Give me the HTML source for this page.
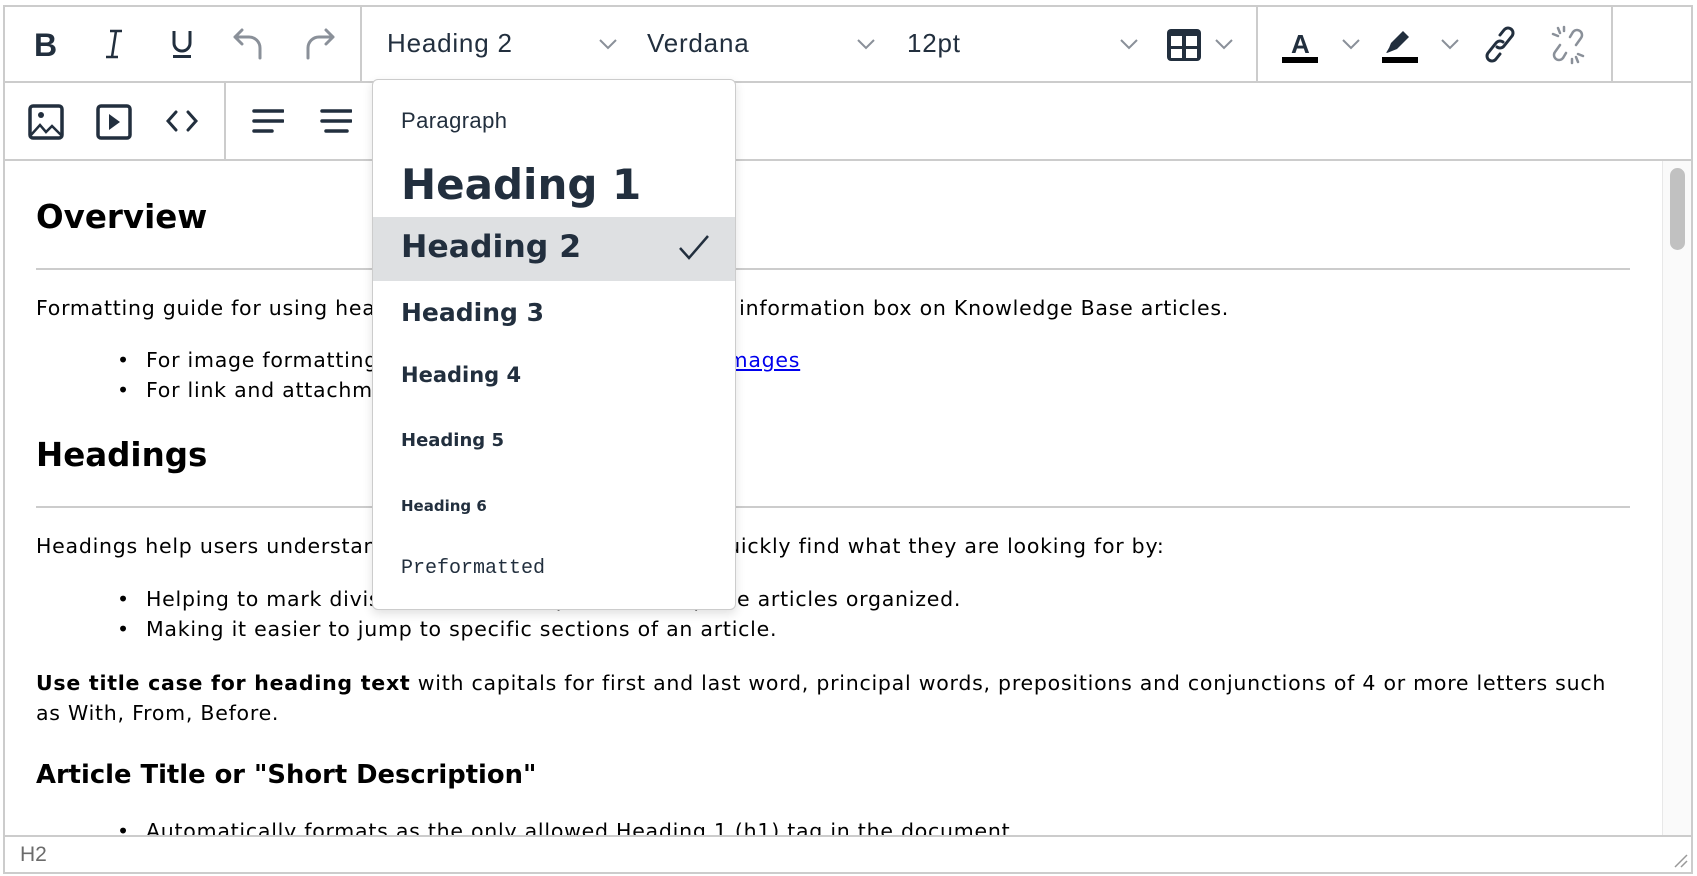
<!DOCTYPE html>
<html><head><meta charset="utf-8">
<style>
*{box-sizing:border-box;margin:0;padding:0}
body{width:1697px;height:876px;background:#fff;position:relative;overflow:hidden;font-family:"DejaVu Sans",Verdana,sans-serif;color:#000}
.a{position:absolute}
.frame{left:3px;top:5px;width:1690px;height:869px;border:2px solid #ccc}
.hl{height:2px;background:#ccc}
.vl{width:2px;background:#ccc}
.tb{font-family:"Liberation Sans",sans-serif;font-size:26px;color:#222f3e;letter-spacing:0.8px;top:28px}
svg{position:absolute}
.c{font-size:20.5px;letter-spacing:0.75px;line-height:24px;white-space:nowrap}
.h2{font-weight:bold;font-size:32.5px;white-space:nowrap}
.dd{left:372px;top:79px;width:364px;height:531px;background:#fff;border:1px solid #ccc;border-radius:6px;box-shadow:0 4px 10px rgba(0,0,0,.12)}
.di{position:absolute;left:28px;color:#222f3e;font-weight:bold;white-space:nowrap;font-family:"DejaVu Sans",sans-serif}
</style></head><body>
<div class="a frame"></div>
<div class="a hl" style="left:3px;top:81px;width:1690px"></div>
<div class="a hl" style="left:3px;top:159px;width:1690px"></div>
<div class="a vl" style="left:360px;top:5px;height:77px"></div>
<div class="a vl" style="left:1256px;top:5px;height:77px"></div>
<div class="a vl" style="left:1611px;top:5px;height:77px"></div>
<div class="a vl" style="left:224px;top:82px;height:78px"></div>

<svg style="left:30px;top:28px" width="32" height="32" viewBox="0 0 32 32"><text x="4" y="28" font-family="Liberation Sans" font-weight="bold" font-size="32" fill="#222f3e">B</text></svg>
<svg style="left:98px;top:28px" width="32" height="32" viewBox="0 0 32 32"><path d="M12 3h12M8 29h12M18 3l-4 26" stroke="#222f3e" stroke-width="2.5" fill="none"/></svg>
<svg style="left:166px;top:28px" width="32" height="32" viewBox="0 0 32 32"><path d="M8 3v12a8 8 0 0 0 16 0V3" stroke="#222f3e" stroke-width="3" fill="none"/><rect x="7" y="27" width="18" height="3" fill="#222f3e"/></svg>
<svg style="left:232px;top:26px" width="34" height="36" viewBox="0 0 34 36"><path d="M10 4L3 11l7 7M3 11h14a11 11 0 0 1 11 11v10" stroke="#8a9099" stroke-width="3" fill="none" stroke-linecap="round" stroke-linejoin="round"/></svg>
<svg style="left:302px;top:26px" width="34" height="36" viewBox="0 0 34 36"><path d="M24 4l7 7-7 7M31 11H17A11 11 0 0 0 6 22v10" stroke="#8a9099" stroke-width="3" fill="none" stroke-linecap="round" stroke-linejoin="round"/></svg>

<div class="a tb" style="left:387px">Heading 2</div>
<div class="a tb" style="left:647px">Verdana</div>
<div class="a tb" style="left:907px">12pt</div>
<svg style="left:598px;top:38px" width="20" height="12"><path d="M2 2l8 8 8-8" stroke="#8a9099" stroke-width="2" fill="none"/></svg>
<svg style="left:856px;top:38px" width="20" height="12"><path d="M2 2l8 8 8-8" stroke="#8a9099" stroke-width="2" fill="none"/></svg>
<svg style="left:1119px;top:38px" width="20" height="12"><path d="M2 2l8 8 8-8" stroke="#8a9099" stroke-width="2" fill="none"/></svg>
<svg style="left:1166px;top:28px" width="36" height="34" viewBox="0 0 36 34"><rect x="1" y="1" width="34" height="32" rx="4" fill="#222f3e"/><rect x="5" y="8" width="11" height="10" fill="#fff"/><rect x="20" y="8" width="11" height="10" fill="#fff"/><rect x="5" y="21" width="11" height="9" fill="#fff"/><rect x="20" y="21" width="11" height="9" fill="#fff"/></svg>
<svg style="left:1214px;top:38px" width="20" height="12"><path d="M2 2l8 8 8-8" stroke="#8a9099" stroke-width="2" fill="none"/></svg>
<svg style="left:1281px;top:28px" width="38" height="36" viewBox="0 0 38 36"><text x="10" y="25" font-family="Liberation Sans" font-weight="bold" font-size="26" fill="#222f3e">A</text><rect x="1" y="29" width="36" height="6" fill="#000"/></svg>
<svg style="left:1341px;top:38px" width="20" height="12"><path d="M2 2l8 8 8-8" stroke="#8a9099" stroke-width="2" fill="none"/></svg>
<svg style="left:1381px;top:27px" width="38" height="37" viewBox="0 0 38 37"><path d="M6 26l4-10 12-12 6 6-12 12z" fill="#222f3e"/><path d="M5 26l5-2-2-3z" fill="#222f3e"/><rect x="1" y="30" width="36" height="6" fill="#000"/></svg>
<svg style="left:1440px;top:38px" width="20" height="12"><path d="M2 2l8 8 8-8" stroke="#8a9099" stroke-width="2" fill="none"/></svg>
<svg style="left:1482px;top:25px" width="36" height="40" viewBox="0 0 36 40"><path d="M18 10l4-5a5 5 0 0 1 8 6l-8 10a5 5 0 0 1-7 1M18 29l-4 5a5 5 0 0 1-8-6l8-10a5 5 0 0 1 7-1" stroke="#222f3e" stroke-width="3" fill="none" stroke-linecap="round"/></svg>
<svg style="left:1550px;top:25px" width="36" height="40" viewBox="0 0 36 40"><path d="M20 12l3-5a5 5 0 0 1 8 6l-5 7M16 28l-3 5a5 5 0 0 1-8-6l5-7M8 3l2 5M3 9l5 2M28 37l-2-5M33 31l-5-2M14 2v4M22 38v-4" stroke="#8a9099" stroke-width="2.5" fill="none" stroke-linecap="round"/></svg>

<svg style="left:28px;top:104px" width="36" height="36" viewBox="0 0 36 36"><rect x="2" y="2" width="32" height="32" rx="3" stroke="#222f3e" stroke-width="3.5" fill="none"/><circle cx="13" cy="11" r="3" fill="#222f3e"/><path d="M3 31l9-10 6 7 6-6 10 10" stroke="#222f3e" stroke-width="2.5" fill="none"/></svg>
<svg style="left:96px;top:104px" width="36" height="36" viewBox="0 0 36 36"><rect x="2" y="2" width="32" height="32" rx="3" stroke="#222f3e" stroke-width="3.5" fill="none"/><path d="M13 10v16l11-8z" fill="#222f3e"/></svg>
<svg style="left:166px;top:109px" width="32" height="24" viewBox="0 0 32 24"><path d="M10 3L2 12l8 9M22 3l8 9-8 9" stroke="#222f3e" stroke-width="3" fill="none" stroke-linecap="round"/></svg>
<svg style="left:252px;top:108px" width="32" height="28" viewBox="0 0 32 28"><path d="M2 3h29M2 13h29M2 23h18" stroke="#222f3e" stroke-width="3.5" stroke-linecap="round"/></svg>
<svg style="left:320px;top:108px" width="32" height="28" viewBox="0 0 32 28"><path d="M2 3h29M2 13h29M6 23h21" stroke="#222f3e" stroke-width="3.5" stroke-linecap="round"/></svg>

<div class="a h2" style="left:36px;top:198px">Overview</div>
<div class="a hl" style="left:36px;top:268px;width:1594px"></div>
<div class="a c" style="left:36px;top:296px">Formatting guide for using headings, lists, tables, links and the information box on Knowledge Base articles.</div>
<div class="a c" style="left:117px;top:348px">•</div>
<div class="a c" style="left:146px;top:348px">For image formatting guidelines, see <span style="color:#00e;text-decoration:underline">KB Formatting Images</span></div>
<div class="a c" style="left:117px;top:378px">•</div>
<div class="a c" style="left:146px;top:378px">For link and attachment formatting, see Links</div>
<div class="a h2" style="left:36px;top:436px">Headings</div>
<div class="a hl" style="left:36px;top:506px;width:1594px"></div>
<div class="a c" style="left:36px;top:534px">Headings help users understand the structure of articles and quickly find what they are looking for by:</div>
<div class="a c" style="left:117px;top:587px">•</div>
<div class="a c" style="left:146px;top:587px">Helping to mark divisions between topics and keep the articles organized.</div>
<div class="a c" style="left:117px;top:617px">•</div>
<div class="a c" style="left:146px;top:617px">Making it easier to jump to specific sections of an article.</div>
<div class="a c" style="left:36px;top:671px"><b>Use title case for heading text</b> with capitals for first and last word, principal words, prepositions and conjunctions of 4 or more letters such</div>
<div class="a c" style="left:36px;top:701px">as With, From, Before.</div>
<div class="a" style="left:36px;top:760px;font-size:25.8px;font-weight:bold;white-space:nowrap">Article Title or "Short Description"</div>
<div class="a c" style="left:117px;top:819px">•</div>
<div class="a c" style="left:146px;top:819px">Automatically formats as the only allowed Heading 1 (h1) tag in the document.</div>

<div class="a" style="left:1662px;top:161px;width:29px;height:675px;background:#fafafa;border-left:1px solid #e8e8e8"></div>
<div class="a" style="left:1670px;top:168px;width:15px;height:82px;background:#c1c1c1;border-radius:8px"></div>

<div class="a" style="left:5px;top:835px;width:1686px;height:37px;background:#fff;border-top:2px solid #ccc"></div>
<div class="a" style="left:20px;top:843px;font-family:'Liberation Sans',sans-serif;font-size:21px;color:#6b6b6b">H2</div>
<svg style="left:1672px;top:852px" width="16" height="16"><path d="M15 3L3 15M15 9l-6 6" stroke="#999" stroke-width="1.5"/></svg>

<div class="a dd">
  <div class="di" style="top:28px;font-family:'Liberation Sans',sans-serif;font-weight:normal;font-size:22px;letter-spacing:0.4px">Paragraph</div>
  <div class="di" style="top:80px;font-size:42px">Heading 1</div>
  <div style="position:absolute;left:0;top:137px;width:362px;height:64px;background:#dee0e2"></div>
  <div class="di" style="top:149px;font-size:31.5px">Heading 2</div>
  <svg style="left:304px;top:153px" width="34" height="30" viewBox="0 0 34 30"><path d="M3 15l9 10L31 3" stroke="#222f3e" stroke-width="2.5" fill="none"/></svg>
  <div class="di" style="top:218px;font-size:25px">Heading 3</div>
  <div class="di" style="top:283px;font-size:21px">Heading 4</div>
  <div class="di" style="top:350px;font-size:18px">Heading 5</div>
  <div class="di" style="top:417px;font-size:15px">Heading 6</div>
  <div class="di" style="top:477px;font-family:'Liberation Mono',monospace;font-weight:normal;font-size:20px">Preformatted</div>
</div>
</body></html>
